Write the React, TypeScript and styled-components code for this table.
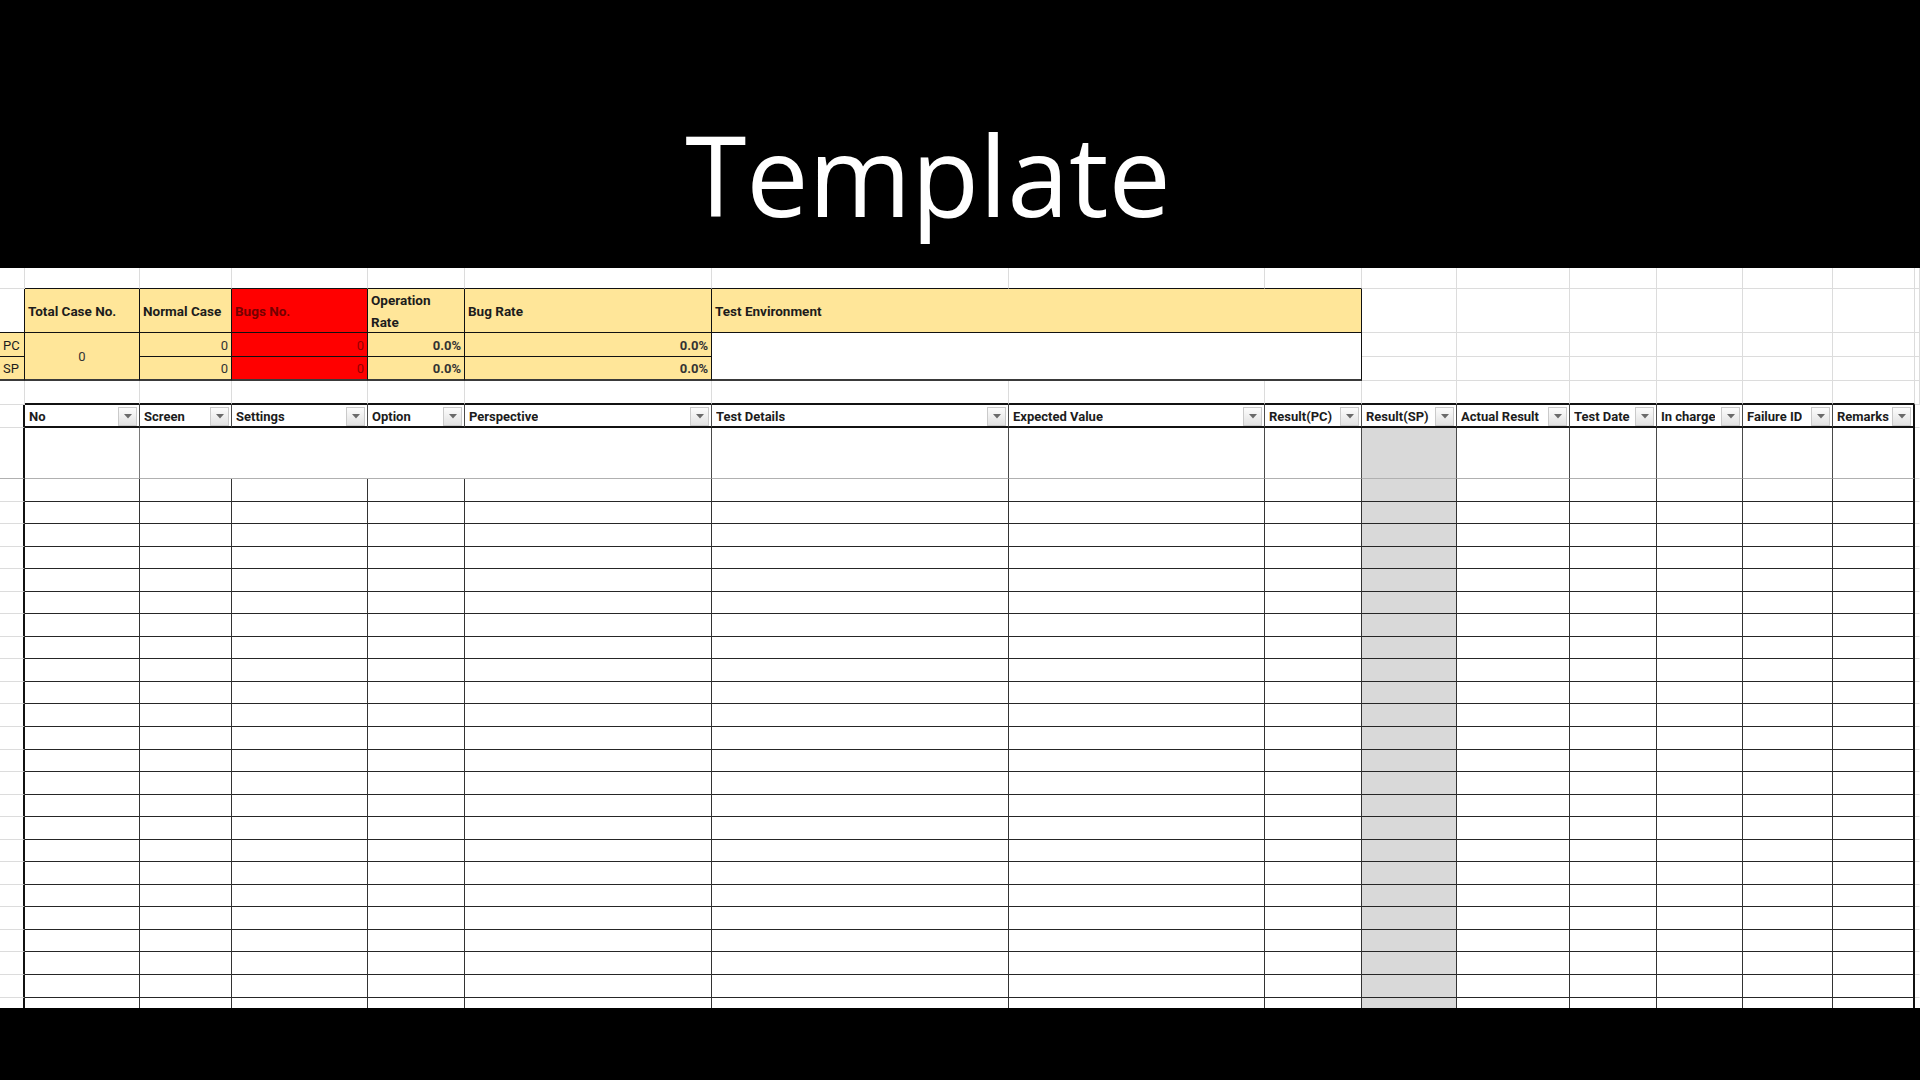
import React from "react";
import styled, { createGlobalStyle, css } from "styled-components";

const GlobalStyle = createGlobalStyle`
  html, body { margin: 0; padding: 0; background: #000; }
  body { width: 1920px; height: 1080px; overflow: hidden; font-family: Roboto, "Liberation Sans", Arial, sans-serif; }
  * { box-sizing: border-box; }
`;

const GRID_LINE = "#dcdcdc";
const INK = "#1c1c1c";
const BLACK = "#111";
const YELLOW = "#ffe699";
const RED = "#ff0000";
const SHADE = "#d9d9d9";

const COLUMNS =
  "25px 115px 92px 136px 97px 247px 297px 256px 97px 95px 113px 87px 86px 90px 82px 1fr";

const Page = styled.div`
  width: 1920px;
  height: 1080px;
  background: #000;
  display: flex;
  flex-direction: column;
`;

const TitleBar = styled.header`
  height: 268px;
  flex: none;
  display: flex;
  justify-content: center;
  align-items: flex-start;
  padding: 119px 64px 0 0;
`;

const Title = styled.h1`
  margin: 0;
  font-family: "Open Sans", "Noto Sans", sans-serif;
  font-weight: 400;
  font-size: 111px;
  line-height: 1;
  color: #fff;
`;

const Sheet = styled.main`
  height: 740px;
  flex: none;
  background: #fff;
  overflow: hidden;
`;

const Grid = styled.div<{ $rows: string }>`
  display: grid;
  grid-template-columns: ${COLUMNS};
  grid-template-rows: ${(p) => p.$rows};
`;

type Edge = {
  $r?: string;
  $rw?: number;
  $b?: string;
  $bw?: number;
  $span?: number;
  $rowSpan?: number;
  $bg?: string;
};

const cellBase = css<Edge>`
  min-width: 0;
  display: flex;
  align-items: center;
  overflow: hidden;
  white-space: nowrap;
  background: ${(p) => p.$bg ?? "#fff"};
  border-right: ${(p) => p.$rw ?? 1}px solid ${(p) => p.$r ?? GRID_LINE};
  border-bottom: ${(p) => p.$bw ?? 1}px solid ${(p) => p.$b ?? GRID_LINE};
  grid-column: span ${(p) => p.$span ?? 1};
  grid-row: span ${(p) => p.$rowSpan ?? 1};
  font-size: 13px;
  color: ${INK};
`;

const Blank = styled.div<Edge>`
  ${cellBase}
`;

const SummaryHead = styled.div<Edge & { $color?: string }>`
  ${cellBase}
  padding: 0 3px;
  font-weight: 700;
  font-size: 13.5px;
  line-height: 22px;
  white-space: normal;
  color: ${(p) => p.$color ?? INK};
`;

const RowLabel = styled.div<Edge>`
  ${cellBase}
  padding: 1px 3px 0;
  font-size: 13px;
`;

const SummaryValue = styled.div<
  Edge & { $align?: "left" | "center" | "right"; $bold?: boolean; $color?: string }
>`
  ${cellBase}
  padding: 1px 3px 0;
  justify-content: ${(p) =>
    p.$align === "center" ? "center" : p.$align === "left" ? "flex-start" : "flex-end"};
  font-weight: ${(p) => (p.$bold ? 700 : 400)};
  color: ${(p) => p.$color ?? "#333"};
`;

const HeadCell = styled.div<Edge>`
  ${cellBase}
  justify-content: space-between;
  gap: 2px;
  padding: 2px 2px 0 4px;
  font-weight: 700;
  font-size: 13px;
`;

const HeadLabel = styled.span`
  overflow: hidden;
  min-width: 0;
`;

const FilterButton = styled.span`
  flex: none;
  width: 19px;
  height: 19px;
  display: flex;
  align-items: center;
  justify-content: center;
  border: 1px solid #cacaca;
  background: linear-gradient(#fcfcfc, #e2e2e2);
`;

const BodyCell = styled.div<Edge>`
  ${cellBase}
`;

const FilterIcon = () => (
  <svg width="8" height="5" viewBox="0 0 8 5" aria-hidden="true">
    <polygon points="0,0 8,0 4,4.5" fill="#6a6a6a" />
  </svg>
);

const HEADERS = [
  "No",
  "Screen",
  "Settings",
  "Option",
  "Perspective",
  "Test Details",
  "Expected Value",
  "Result(PC)",
  "Result(SP)",
  "Actual Result",
  "Test Date",
  "In charge",
  "Failure ID",
  "Remarks",
];

const DATA_ROWS = 25;
const TOTAL_COLS = 16;

function SummarySection() {
  const row1 = Array.from({ length: TOTAL_COLS }, (_, i) => (
    <Blank key={`r1-${i}`} $b={i >= 1 && i <= 8 ? BLACK : undefined} />
  ));
  const trailing = (prefix: string) =>
    Array.from({ length: 7 }, (_, i) => <Blank key={`${prefix}-${i}`} />);
  const row5 = Array.from({ length: TOTAL_COLS }, (_, i) => (
    <Blank
      key={`r5-${i}`}
      $b={i >= 1 && i <= 14 ? BLACK : undefined}
      $bw={i >= 1 && i <= 14 ? 2 : 1}
    />
  ));

  return (
    <Grid $rows="21px 44px 24px 24px 24px">
      {row1}

      <Blank $r={BLACK} $b={BLACK} />
      <SummaryHead $bg={YELLOW} $r={BLACK} $b={BLACK}>
        Total Case No.
      </SummaryHead>
      <SummaryHead $bg={YELLOW} $r={BLACK} $b={BLACK}>
        Normal Case
      </SummaryHead>
      <SummaryHead $bg={RED} $r={BLACK} $b={BLACK} $color="#750000">
        Bugs No.
      </SummaryHead>
      <SummaryHead $bg={YELLOW} $r={BLACK} $b={BLACK}>
        Operation
        <br />
        Rate
      </SummaryHead>
      <SummaryHead $bg={YELLOW} $r={BLACK} $b={BLACK}>
        Bug Rate
      </SummaryHead>
      <SummaryHead $bg={YELLOW} $r={BLACK} $b={BLACK} $span={3}>
        Test Environment
      </SummaryHead>
      {trailing("r2")}

      <RowLabel $bg={YELLOW} $r={BLACK} $b={BLACK}>
        PC
      </RowLabel>
      <SummaryValue $bg={YELLOW} $r={BLACK} $b="#3a3a3a" $bw={2} $rowSpan={2} $align="center">
        0
      </SummaryValue>
      <SummaryValue $bg={YELLOW} $r={BLACK} $b={BLACK}>
        0
      </SummaryValue>
      <SummaryValue $bg={RED} $r={BLACK} $b={BLACK} $color="#960000">
        0
      </SummaryValue>
      <SummaryValue $bg={YELLOW} $r={BLACK} $b={BLACK} $bold>
        0.0%
      </SummaryValue>
      <SummaryValue $bg={YELLOW} $r={BLACK} $b={BLACK} $bold>
        0.0%
      </SummaryValue>
      <Blank $r={BLACK} $b="#3a3a3a" $bw={2} $span={3} $rowSpan={2} />
      {trailing("r3")}

      <RowLabel $bg={YELLOW} $r={BLACK} $b="#3a3a3a" $bw={2}>
        SP
      </RowLabel>
      <SummaryValue $bg={YELLOW} $r={BLACK} $b="#3a3a3a" $bw={2}>
        0
      </SummaryValue>
      <SummaryValue $bg={RED} $r={BLACK} $b="#3a3a3a" $bw={2} $color="#960000">
        0
      </SummaryValue>
      <SummaryValue $bg={YELLOW} $r={BLACK} $b="#3a3a3a" $bw={2} $bold>
        0.0%
      </SummaryValue>
      <SummaryValue $bg={YELLOW} $r={BLACK} $b="#3a3a3a" $bw={2} $bold>
        0.0%
      </SummaryValue>
      {trailing("r4")}

      {row5}
    </Grid>
  );
}

function TableSection() {
  const last = HEADERS.length - 1;
  return (
    <Grid $rows={`23px 51px repeat(${DATA_ROWS}, 22.55px)`}>
      <Blank $r={BLACK} $rw={2} />
      {HEADERS.map((h, i) => (
        <HeadCell
          key={h}
          $b={BLACK}
          $bw={2}
          $r={i === last ? BLACK : "#4a4a4a"}
          $rw={i === last ? 2 : 1}
        >
          <HeadLabel>{h}</HeadLabel>
          <FilterButton>
            <FilterIcon />
          </FilterButton>
        </HeadCell>
      ))}
      <Blank $r="transparent" />

      <Blank $r={BLACK} $rw={2} $b="#b0b0b0" />
      <BodyCell $r="#7a7a7a" $b="#b0b0b0" />
      <BodyCell $r="#4a4a4a" $b="#b0b0b0" $span={4} />
      <BodyCell $r="#4a4a4a" $b="#b0b0b0" />
      <BodyCell $r="#4a4a4a" $b="#b0b0b0" />
      <BodyCell $r="#4a4a4a" $b="#b0b0b0" />
      <BodyCell $r="#4a4a4a" $b="#b0b0b0" $bg={SHADE} />
      <BodyCell $r="#4a4a4a" $b="#b0b0b0" />
      <BodyCell $r="#4a4a4a" $b="#b0b0b0" />
      <BodyCell $r="#4a4a4a" $b="#b0b0b0" />
      <BodyCell $r="#4a4a4a" $b="#b0b0b0" />
      <BodyCell $r={BLACK} $rw={2} $b="#b0b0b0" />
      <Blank $r="transparent" />

      {Array.from({ length: DATA_ROWS }, (_, r) => (
        <React.Fragment key={`row-${r}`}>
          <Blank $r={BLACK} $rw={2} />
          {HEADERS.map((h, i) => (
            <BodyCell
              key={`${r}-${h}`}
              $b="#262626"
              $r={i === last ? BLACK : "#333"}
              $rw={i === last ? 2 : 1}
              $bg={h === "Result(SP)" ? SHADE : undefined}
            />
          ))}
          <Blank $r="transparent" />
        </React.Fragment>
      ))}
    </Grid>
  );
}

export default function App() {
  return (
    <>
      <GlobalStyle />
      <Page>
        <TitleBar>
          <Title>Template</Title>
        </TitleBar>
        <Sheet>
          <SummarySection />
          <TableSection />
        </Sheet>
      </Page>
    </>
  );
}
